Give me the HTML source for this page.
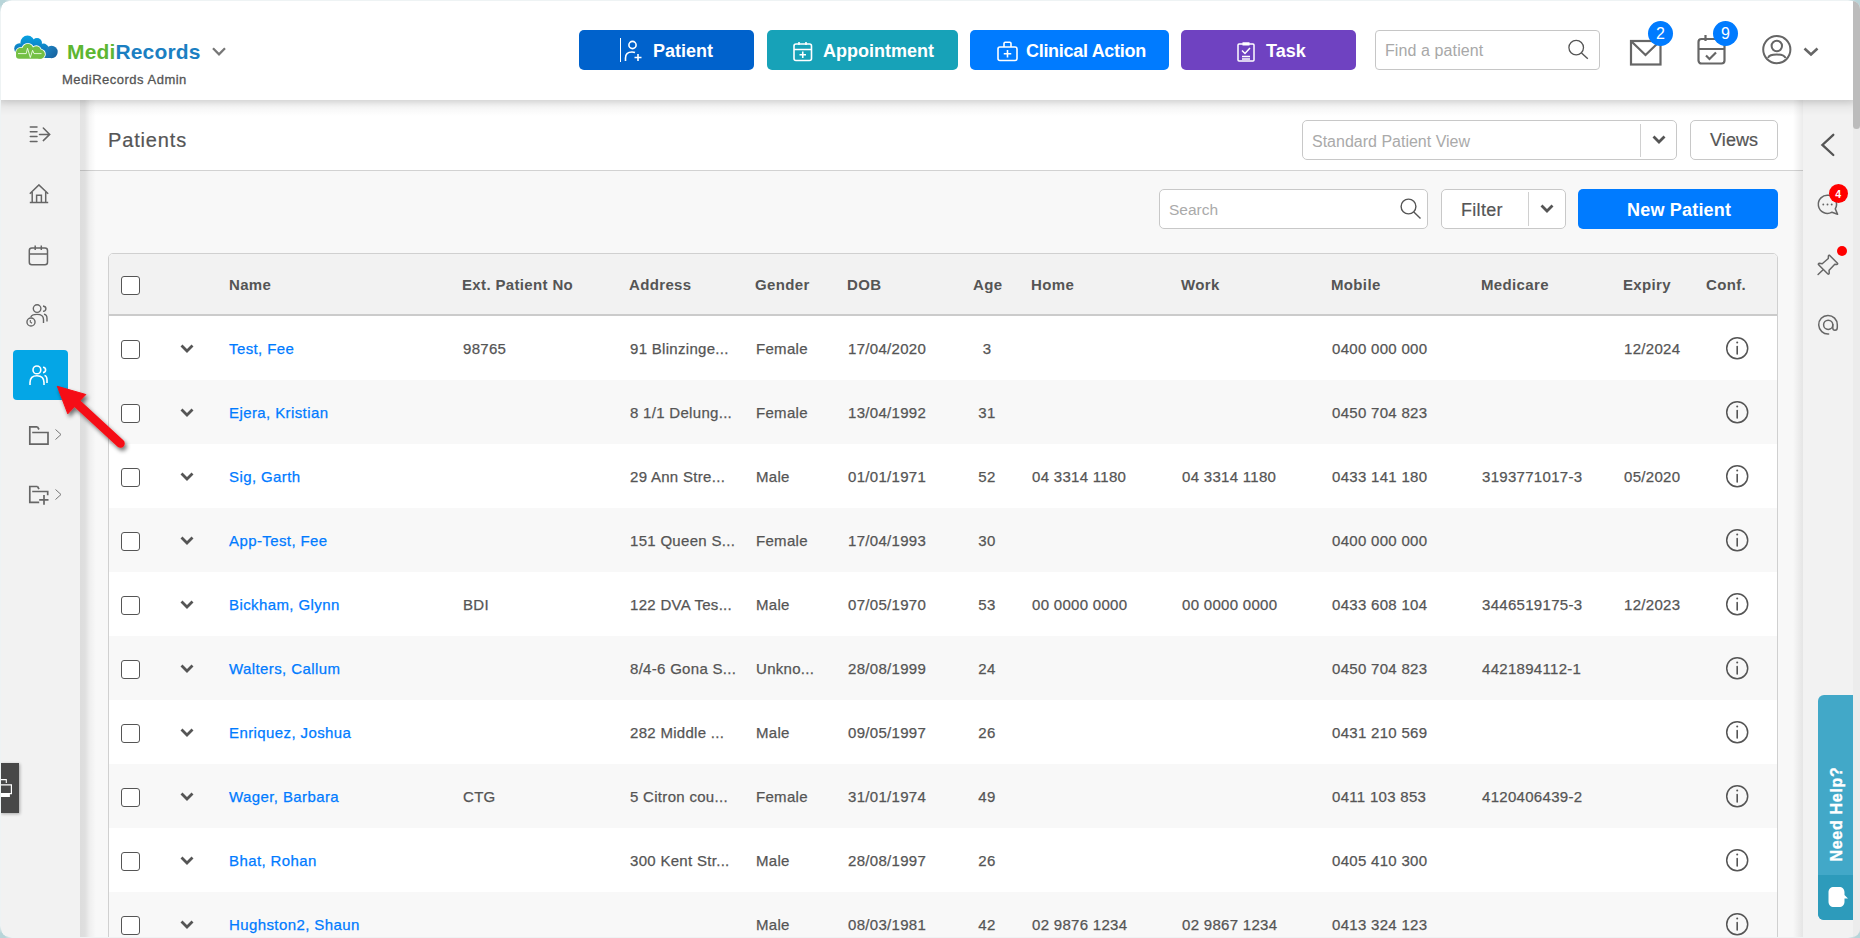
<!DOCTYPE html>
<html><head><meta charset="utf-8">
<style>
*{box-sizing:border-box;margin:0;padding:0}
html,body{width:1860px;height:938px;overflow:hidden;background:#eef3f4;font-family:"Liberation Sans",sans-serif;color:#555}
#win{position:absolute;left:0;top:0;width:1860px;height:938px;overflow:hidden;clip-path:inset(1px 0 1px 1px round 8px)}
.cor{position:absolute;width:12px;height:12px}
.c1{background:radial-gradient(circle at 0 0,#b8d5d9 5px,rgba(184,213,217,0) 12px)}.c2{background:radial-gradient(circle at 100% 0,#b8d5d9 5px,rgba(184,213,217,0) 12px)}.c3{background:radial-gradient(circle at 0 100%,#b8d5d9 5px,rgba(184,213,217,0) 12px)}.c4{background:radial-gradient(circle at 100% 100%,#b8d5d9 5px,rgba(184,213,217,0) 12px)}
.abs{position:absolute}
#hdr{position:absolute;left:1px;top:1px;width:1852px;height:99px;background:#fff;border-top-left-radius:8px;z-index:5;box-shadow:0 1px 8px rgba(0,0,0,.12)}
#lsb{position:absolute;left:1px;top:100px;width:79px;height:837px;background:#f2f2f2;border-bottom-left-radius:8px}
#main{position:absolute;left:80px;top:100px;width:1723px;height:838px;background:#f8f8f8;overflow:hidden}
#rsb{position:absolute;left:1803px;top:100px;width:50px;height:837px;background:#f2f2f2}
#sbar{position:absolute;left:1853px;top:0;width:7px;height:938px;background:#ececec;z-index:6}
#thumb{position:absolute;left:0;top:1px;width:7px;height:128px;background:#bcbcbc;border-radius:0 0 4px 4px}
.btn{position:absolute;top:30px;height:40px;border-radius:5px;color:#fff;font-weight:bold;font-size:18px;line-height:40px}
.btn span{position:absolute;top:1px}
.btn svg{position:absolute}
.txt{position:absolute;white-space:nowrap}
.row{position:absolute;left:0;width:1668px;height:64px;font-size:15px;line-height:64px;letter-spacing:.3px}
.row.alt{background:#f8f8f8}
.row span{position:absolute;top:.5px;white-space:nowrap;-webkit-text-stroke:.25px currentColor}
.row .nm{color:#007bff;left:121px;letter-spacing:.4px}
.cb{position:absolute;width:19px;height:19px;border:1.5px solid #555;border-radius:3px;background:#fff}
.hd span{position:absolute;white-space:nowrap;font-weight:bold;font-size:15px;letter-spacing:.35px;color:#555}
</style></head><body>
<div class="cor c1" style="left:0;top:0"></div><div class="cor c2" style="right:0;top:0"></div><div class="cor c3" style="left:0;bottom:0"></div><div class="cor c4" style="right:0;bottom:0"></div>
<div id="win">


<div id="hdr"></div>
<div class="abs" style="left:0;top:0;width:1860px;height:100px;z-index:7">
  <!-- logo -->
  <svg class="abs" style="left:0;top:0" width="70" height="70" viewBox="0 0 70 70">
    <defs>
      <linearGradient id="gb" x1="0" y1="35" x2="0" y2="57" gradientUnits="userSpaceOnUse"><stop offset="0" stop-color="#07a3e3"/><stop offset="1" stop-color="#1768ab"/></linearGradient>
      <linearGradient id="gd" x1="42" y1="45" x2="58" y2="58" gradientUnits="userSpaceOnUse"><stop offset="0" stop-color="#1f8fd0"/><stop offset="1" stop-color="#175d98"/></linearGradient>
    </defs>
    <g fill="url(#gd)"><circle cx="44.5" cy="48.5" r="4"/><circle cx="51.5" cy="52" r="6.2"/><rect x="42" y="50" width="10" height="8"/></g>
    <g fill="url(#gb)"><circle cx="19.5" cy="48.5" r="5.3"/><circle cx="27.5" cy="42.7" r="7.1"/><circle cx="37" cy="43" r="5"/><circle cx="43.5" cy="47" r="3.5"/><rect x="17" y="47" width="27" height="7"/></g>
    <g fill="#fff" stroke="#fff" stroke-width="1.8"><circle cx="21" cy="52.8" r="5"/><circle cx="27.8" cy="49.3" r="5.5"/><circle cx="36.3" cy="50.8" r="4.6"/><circle cx="40.3" cy="54.2" r="4.6"/><rect x="16" y="52" width="27" height="6.8" rx="3"/></g>
    <g fill="#74c044"><circle cx="21" cy="52.8" r="5"/><circle cx="27.8" cy="49.3" r="5.5"/><circle cx="36.3" cy="50.8" r="4.6"/><circle cx="40.3" cy="54.2" r="4.6"/><rect x="16" y="52" width="27" height="6.8" rx="3"/></g>
    <path d="M18 53.6 L26.2 53.6 L27.5 48.2 L30.3 57.5 L32.6 50.3 L34 53.6 L41.5 53.6" fill="none" stroke="#f4fff0" stroke-width=".9" stroke-linejoin="round" opacity=".95"/>
  </svg>
  <div class="txt" style="left:67px;top:39px;font-size:21px;font-weight:bold;letter-spacing:.15px;line-height:25px"><span style="color:#5db632">Medi</span><span style="color:#1b7fc2">Records</span></div>
  <svg class="abs" style="left:211px;top:46px" width="16" height="10" viewBox="0 0 16 10"><path d="M2 2.3 L8 8.3 L14 2.3" fill="none" stroke="#777" stroke-width="2.3"/></svg>
  <div class="txt" style="left:62px;top:72px;font-size:13px;letter-spacing:.5px;color:#555;line-height:16px;-webkit-text-stroke:.3px #555">MediRecords Admin</div>

  <!-- buttons -->
  <div class="btn" style="left:579px;width:175px;background:#0062cc">
    <div class="abs" style="left:41px;top:8px;width:1px;height:24px;background:#fff"></div>
    <svg style="left:45px;top:10px" width="20" height="22" viewBox="0 0 20 22"><circle cx="8.5" cy="5" r="3.6" fill="none" stroke="#fff" stroke-width="1.6"/><path d="M1.5 21 L1.5 18 C1.5 14 4 12 8 12 C9 12 10 12.2 11 12.6" fill="none" stroke="#fff" stroke-width="1.6"/><path d="M14 14 L14 21 M10.5 17.5 L17.5 17.5" stroke="#fff" stroke-width="1.6"/></svg>
    <span style="left:74px">Patient</span>
  </div>
  <div class="btn" style="left:767px;width:191px;background:#17a2b8">
    <svg style="left:26px;top:11px" width="20" height="21" viewBox="0 0 20 21"><rect x="1" y="3" width="17.5" height="16.5" rx="2" fill="none" stroke="#fff" stroke-width="1.6"/><path d="M1 8.5 H18.5 M6 1 V4 M13 1 V4 M9.75 10.5 V17 M6.5 13.75 H13" stroke="#fff" stroke-width="1.6"/></svg>
    <span style="left:56px">Appointment</span>
  </div>
  <div class="btn" style="left:970px;width:199px;background:#007bff">
    <svg style="left:27px;top:11px" width="21" height="21" viewBox="0 0 21 21"><rect x="1" y="6" width="19" height="13.5" rx="2" fill="none" stroke="#fff" stroke-width="1.6"/><path d="M7 6 V2.5 C7 1.8 7.5 1.3 8.2 1.3 H12.8 C13.5 1.3 14 1.8 14 2.5 V6" fill="none" stroke="#fff" stroke-width="1.6"/><path d="M10.5 9 V16.5 M6.75 12.75 H14.25" stroke="#fff" stroke-width="1.6"/></svg>
    <span style="left:56px;letter-spacing:-.3px">Clinical Action</span>
  </div>
  <div class="btn" style="left:1181px;width:175px;background:#6f42c1">
    <svg style="left:56px;top:11px" width="18" height="21" viewBox="0 0 18 21"><rect x="1" y="3" width="16" height="17" rx="1" fill="none" stroke="#fff" stroke-width="1.5"/><path d="M5.5 1.2 H12.5 V4.5 H5.5 Z" fill="#fff"/><path d="M5 9.5 L8 12.5 L13 7" fill="none" stroke="#fff" stroke-width="1.5"/><path d="M5 15.5 H13 M5 18 H13" stroke="#fff" stroke-width="1.5"/></svg>
    <span style="left:85px">Task</span>
  </div>

  <!-- find patient -->
  <div class="abs" style="left:1375px;top:30px;width:225px;height:40px;border:1px solid #c6c6c6;border-radius:4px;background:#fff"></div>
  <div class="txt" style="left:1385px;top:41px;font-size:16px;line-height:19px;color:#a8a8a8;letter-spacing:.1px">Find a patient</div>
  <svg class="abs" style="left:1566px;top:38px" width="24" height="24" viewBox="0 0 24 24"><circle cx="10.2" cy="9.6" r="7.3" fill="none" stroke="#555" stroke-width="1.3"/><path d="M15.5 15 L21.8 20.7" stroke="#555" stroke-width="1.4"/></svg>

  <!-- mail -->
  <svg class="abs" style="left:1628px;top:38px" width="36" height="30" viewBox="0 0 36 30"><rect x="3" y="3" width="29.5" height="23.5" fill="none" stroke="#666" stroke-width="2.2"/><path d="M3.5 3.5 L17.5 17 L31.5 3.5" fill="none" stroke="#666" stroke-width="2.2"/></svg>
  <div class="abs" style="left:1648px;top:21px;width:25px;height:25px;border-radius:50%;background:#007bff;color:#fff;font-size:16px;line-height:25px;text-align:center">2</div>
  <!-- calendar -->
  <svg class="abs" style="left:1695px;top:33px" width="34" height="34" viewBox="0 0 34 34"><rect x="3.5" y="6" width="26" height="24.5" rx="3" fill="none" stroke="#666" stroke-width="2.2"/><path d="M3.5 16 H29.5 M10.5 2 V8 M22 2 V8 M11 22.5 L14.5 26 L21 19.5" fill="none" stroke="#666" stroke-width="2.2"/></svg>
  <div class="abs" style="left:1713px;top:21px;width:25px;height:25px;border-radius:50%;background:#007bff;color:#fff;font-size:16px;line-height:25px;text-align:center">9</div>
  <!-- user -->
  <svg class="abs" style="left:1760px;top:33px" width="34" height="34" viewBox="0 0 34 34"><circle cx="16.8" cy="16.6" r="13.6" fill="none" stroke="#666" stroke-width="2"/><circle cx="16.8" cy="13" r="5.2" fill="none" stroke="#666" stroke-width="2"/><path d="M8 25 C9 22 11.5 21.5 16.8 21.5 C22 21.5 24.5 22 25.5 25" fill="none" stroke="#666" stroke-width="2"/></svg>
  <svg class="abs" style="left:1802px;top:46px" width="18" height="12" viewBox="0 0 18 12"><path d="M2.5 2.5 L9 8.5 L15.5 2.5" fill="none" stroke="#666" stroke-width="2.6"/></svg>
</div>

<div id="lsb"></div>
<div class="abs" style="left:0;top:0;width:80px;height:938px;z-index:3">
  <!-- expand -->
  <svg class="abs" style="left:28px;top:124px" width="24" height="20" viewBox="0 0 24 20"><path d="M2.3 3 H9 M2.3 7.8 H9 M2.3 12.6 H9 M2.3 17.5 H9 M11.5 10.4 H21.5 M15.3 4 L21.7 10.4 L15.3 16.6" fill="none" stroke="#666" stroke-width="1.5" stroke-linecap="round"/></svg>
  <!-- home -->
  <svg class="abs" style="left:27px;top:184px" width="24" height="22" viewBox="0 0 24 22"><path d="M2.8 9.7 L11.9 0.9 L21.2 9.7 M5.2 8 V18.5 M18.7 8 V18.5 M2.8 18.5 H21.2 M9.6 18.5 V11.2 H14.4 V18.5" fill="none" stroke="#666" stroke-width="1.5"/></svg>
  <!-- calendar -->
  <svg class="abs" style="left:27px;top:244px" width="24" height="22" viewBox="0 0 24 22"><rect x="2.3" y="4.1" width="18.2" height="16.7" rx="2.5" fill="none" stroke="#666" stroke-width="1.5"/><path d="M2.3 10 H20.5 M8.2 1.6 V6 M14.3 1.6 V6" fill="none" stroke="#666" stroke-width="1.5"/></svg>
  <!-- patients w/ clock -->
  <svg class="abs" style="left:20px;top:295px" width="40" height="40" viewBox="0 0 40 40"><circle cx="17.1" cy="13.6" r="3.8" fill="none" stroke="#666" stroke-width="1.4"/><path d="M23 11 C25 11.3 25.9 12.5 25.9 13.7 C25.9 15 25 16.2 23 16.4 M10.8 22.2 C11.5 20.2 14 19.4 17 19.4 C21 19.4 23.5 21 23.5 24.5 V27.9 M24 19.3 C26 19.6 27 21 27 23.5 V26.6" fill="none" stroke="#666" stroke-width="1.4"/><circle cx="11" cy="27" r="4.05" fill="#f2f2f2" stroke="#666" stroke-width="1.4"/><path d="M10.3 25 V27 L12 28.3" fill="none" stroke="#666" stroke-width="1.1"/></svg>
  <!-- active patients -->
  <div class="abs" style="left:13px;top:350px;width:55px;height:50px;border-radius:4px;background:#04a6e6"></div>
  <svg class="abs" style="left:27px;top:364px" width="24" height="24" viewBox="0 0 24 24"><circle cx="9.9" cy="5.9" r="3.9" fill="none" stroke="#fff" stroke-width="1.6"/><path d="M16 3.3 C17.8 3.5 18.6 4.7 18.6 6 C18.6 7.3 17.8 8.4 16 8.6 M3 21 V18.5 C3 14 5.5 11.7 10 11.7 C14.5 11.7 17 14 17 18.5 V21 M17.5 11.5 C19 11.8 20 13.5 20 16 V19" fill="none" stroke="#fff" stroke-width="1.6"/></svg>
  <!-- folder -->
  <svg class="abs" style="left:27px;top:424px" width="40" height="24" viewBox="0 0 40 24"><path d="M10.5 2.8 L12 5.5 M2.8 2.8 H10.5 M2.8 2 V20.2 H21 V8.5 H5.2" fill="none" stroke="#666" stroke-width="1.7"/><path d="M28.5 5.5 L34 10.5 L28.5 15.5" fill="none" stroke="#777" stroke-width="1"/></svg>
  <!-- folder plus -->
  <svg class="abs" style="left:27px;top:484px" width="40" height="26" viewBox="0 0 40 26"><path d="M10.5 2.5 L12 5.2 M2.8 2.5 H10.5 M2.8 1.8 V18.4 H12.2 M5.2 7.5 H20.7 V11.2" fill="none" stroke="#666" stroke-width="1.7"/><path d="M17 11 V20.8 M12.2 15.8 H21.5" fill="none" stroke="#666" stroke-width="1.7"/><path d="M28.5 5.5 L34 10.5 L28.5 15.5" fill="none" stroke="#777" stroke-width="1"/></svg>
  <!-- dark tab -->
  <div class="abs" style="left:0;top:763px;width:19px;height:50px;background:#484848;box-shadow:1px 1px 3px rgba(0,0,0,.3)"></div>
  <svg class="abs" style="left:0;top:776px" width="16" height="24" viewBox="0 0 16 24"><path d="M-1 3.6 H6.3 V7" fill="none" stroke="#fff" stroke-width="1.1"/><path d="M-1 8.8 H11.4 V17.6 H-1" fill="none" stroke="#fff" stroke-width="1.2"/><rect x="-1" y="17.8" width="10.9" height="3.2" fill="#fff"/></svg>
</div>
<!-- sidebar shadow -->
<div class="abs" style="left:80px;top:100px;width:16px;height:838px;background:linear-gradient(to right,rgba(0,0,0,.11),rgba(0,0,0,.10) 30%,rgba(0,0,0,.04) 60%,rgba(0,0,0,0));z-index:2"></div>
<div id="main"></div>
<div class="abs" style="left:80px;top:100px;width:1723px;height:71px;background:#fff;border-bottom:1px solid #d2d2d2;z-index:1"></div>
<!-- header shadow over main -->
<div class="abs" style="left:0;top:100px;width:1853px;height:16px;background:linear-gradient(to bottom,rgba(0,0,0,.09),rgba(0,0,0,.04) 40%,rgba(0,0,0,0));z-index:4"></div>
<!-- right sidebar shadow -->
<div class="abs" style="left:1793px;top:100px;width:10px;height:838px;background:linear-gradient(to left,rgba(0,0,0,.08),rgba(0,0,0,0));z-index:2"></div>
<div class="abs" style="left:0;top:0;width:1860px;height:938px;z-index:1">
  <div class="txt" style="left:108px;top:128px;font-size:20px;line-height:24px;letter-spacing:.85px;color:#555;-webkit-text-stroke:.2px #555">Patients</div>
  <!-- view dropdown -->
  <div class="abs" style="left:1302px;top:120px;width:375px;height:40px;border:1px solid #c8c8c8;border-radius:5px;background:#fff"></div>
  <div class="abs" style="left:1640px;top:124px;width:1px;height:33px;background:#d0d0d0"></div>
  <div class="txt" style="left:1312px;top:132px;font-size:16px;line-height:19px;color:#aaa">Standard Patient View</div>
  <svg class="abs" style="left:1651px;top:134px" width="16" height="12" viewBox="0 0 16 12"><path d="M2.5 2.5 L8 8 L13.5 2.5" fill="none" stroke="#555" stroke-width="2.8"/></svg>
  <div class="abs" style="left:1690px;top:120px;width:88px;height:40px;border:1px solid #c8c8c8;border-radius:5px;background:#fff"></div>
  <div class="txt" style="left:1710px;top:130px;font-size:18px;line-height:21px;color:#555;letter-spacing:.1px;-webkit-text-stroke:.2px #555">Views</div>

  <!-- toolbar -->
  <div class="abs" style="left:1159px;top:189px;width:269px;height:40px;border:1px solid #c8c8c8;border-radius:5px;background:#fff"></div>
  <div class="txt" style="left:1169px;top:200px;font-size:15.5px;line-height:19px;color:#aaa">Search</div>
  <svg class="abs" style="left:1398px;top:196px" width="26" height="26" viewBox="0 0 26 26"><circle cx="10.5" cy="10.5" r="7.4" fill="none" stroke="#555" stroke-width="1.4"/><path d="M15.8 16 L22.5 22.5" stroke="#555" stroke-width="1.4"/></svg>
  <div class="abs" style="left:1441px;top:189px;width:125px;height:40px;border:1px solid #c8c8c8;border-radius:5px;background:#fff"></div>
  <div class="abs" style="left:1528px;top:192px;width:1px;height:34px;background:#d0d0d0"></div>
  <div class="txt" style="left:1461px;top:200px;font-size:18px;line-height:21px;color:#555;letter-spacing:.3px;-webkit-text-stroke:.2px #555">Filter</div>
  <svg class="abs" style="left:1539px;top:203px" width="16" height="12" viewBox="0 0 16 12"><path d="M2.5 2.5 L8 8 L13.5 2.5" fill="none" stroke="#555" stroke-width="2.8"/></svg>
  <div class="abs" style="left:1578px;top:189px;width:200px;height:40px;border-radius:5px;background:#007bff"></div>
  <div class="txt" style="left:1627px;top:200px;font-size:18px;line-height:21px;color:#fff;font-weight:bold;letter-spacing:.2px">New Patient</div>

  <!-- table -->
  <div class="abs" style="left:108px;top:253px;width:1670px;height:700px;border:1px solid #d0d0d0;border-radius:5px 5px 0 0;background:#fff;overflow:hidden">
    <div class="abs hd" style="left:0;top:0;width:1668px;height:62px;background:#f2f2f2;border-bottom:2px solid #cbcbcb">
      <div class="cb" style="left:12px;top:22px"></div>
      <span style="left:120px;top:22px">Name</span>
      <span style="left:353px;top:22px">Ext. Patient No</span>
      <span style="left:520px;top:22px">Address</span>
      <span style="left:646px;top:22px">Gender</span>
      <span style="left:738px;top:22px">DOB</span>
      <span style="left:864px;top:22px">Age</span>
      <span style="left:922px;top:22px">Home</span>
      <span style="left:1072px;top:22px">Work</span>
      <span style="left:1222px;top:22px">Mobile</span>
      <span style="left:1372px;top:22px">Medicare</span>
      <span style="left:1514px;top:22px">Expiry</span>
      <span style="left:1597px;top:22px">Conf.</span>
    </div>
    <div class="row" style="top:62px"><div class="cb" style="left:12px;top:24px"></div><svg class="abs" style="left:70px;top:27px" width="16" height="12" viewBox="0 0 16 12"><path d="M2.5 2.5 L8 8 L13.5 2.5" fill="none" stroke="#555" stroke-width="2.8"/></svg><span class="nm" style="left:120px">Test, Fee</span><span style="left:354px">98765</span><span style="left:521px">91 Blinzinge...</span><span style="left:647px">Female</span><span style="left:739px">17/04/2020</span><span style="left:849px;width:58px;text-align:center">3</span><span style="left:1223px">0400 000 000</span><span style="left:1515px">12/2024</span><svg class="abs" style="left:1616px;top:20px" width="25" height="25" viewBox="0 0 25 25"><circle cx="12.2" cy="12.2" r="10.5" fill="none" stroke="#555" stroke-width="1.5"/><circle cx="12.2" cy="6.6" r="1" fill="#555"/><path d="M12.2 10.5 V18" stroke="#555" stroke-width="1.6" stroke-linecap="round"/></svg></div>
    <div class="row alt" style="top:126px"><div class="cb" style="left:12px;top:24px"></div><svg class="abs" style="left:70px;top:27px" width="16" height="12" viewBox="0 0 16 12"><path d="M2.5 2.5 L8 8 L13.5 2.5" fill="none" stroke="#555" stroke-width="2.8"/></svg><span class="nm" style="left:120px">Ejera, Kristian</span><span style="left:521px">8 1/1 Delung...</span><span style="left:647px">Female</span><span style="left:739px">13/04/1992</span><span style="left:849px;width:58px;text-align:center">31</span><span style="left:1223px">0450 704 823</span><svg class="abs" style="left:1616px;top:20px" width="25" height="25" viewBox="0 0 25 25"><circle cx="12.2" cy="12.2" r="10.5" fill="none" stroke="#555" stroke-width="1.5"/><circle cx="12.2" cy="6.6" r="1" fill="#555"/><path d="M12.2 10.5 V18" stroke="#555" stroke-width="1.6" stroke-linecap="round"/></svg></div>
    <div class="row" style="top:190px"><div class="cb" style="left:12px;top:24px"></div><svg class="abs" style="left:70px;top:27px" width="16" height="12" viewBox="0 0 16 12"><path d="M2.5 2.5 L8 8 L13.5 2.5" fill="none" stroke="#555" stroke-width="2.8"/></svg><span class="nm" style="left:120px">Sig, Garth</span><span style="left:521px">29 Ann Stre...</span><span style="left:647px">Male</span><span style="left:739px">01/01/1971</span><span style="left:849px;width:58px;text-align:center">52</span><span style="left:923px">04 3314 1180</span><span style="left:1073px">04 3314 1180</span><span style="left:1223px">0433 141 180</span><span style="left:1373px">3193771017-3</span><span style="left:1515px">05/2020</span><svg class="abs" style="left:1616px;top:20px" width="25" height="25" viewBox="0 0 25 25"><circle cx="12.2" cy="12.2" r="10.5" fill="none" stroke="#555" stroke-width="1.5"/><circle cx="12.2" cy="6.6" r="1" fill="#555"/><path d="M12.2 10.5 V18" stroke="#555" stroke-width="1.6" stroke-linecap="round"/></svg></div>
    <div class="row alt" style="top:254px"><div class="cb" style="left:12px;top:24px"></div><svg class="abs" style="left:70px;top:27px" width="16" height="12" viewBox="0 0 16 12"><path d="M2.5 2.5 L8 8 L13.5 2.5" fill="none" stroke="#555" stroke-width="2.8"/></svg><span class="nm" style="left:120px">App-Test, Fee</span><span style="left:521px">151 Queen S...</span><span style="left:647px">Female</span><span style="left:739px">17/04/1993</span><span style="left:849px;width:58px;text-align:center">30</span><span style="left:1223px">0400 000 000</span><svg class="abs" style="left:1616px;top:20px" width="25" height="25" viewBox="0 0 25 25"><circle cx="12.2" cy="12.2" r="10.5" fill="none" stroke="#555" stroke-width="1.5"/><circle cx="12.2" cy="6.6" r="1" fill="#555"/><path d="M12.2 10.5 V18" stroke="#555" stroke-width="1.6" stroke-linecap="round"/></svg></div>
    <div class="row" style="top:318px"><div class="cb" style="left:12px;top:24px"></div><svg class="abs" style="left:70px;top:27px" width="16" height="12" viewBox="0 0 16 12"><path d="M2.5 2.5 L8 8 L13.5 2.5" fill="none" stroke="#555" stroke-width="2.8"/></svg><span class="nm" style="left:120px">Bickham, Glynn</span><span style="left:354px">BDI</span><span style="left:521px">122 DVA Tes...</span><span style="left:647px">Male</span><span style="left:739px">07/05/1970</span><span style="left:849px;width:58px;text-align:center">53</span><span style="left:923px">00 0000 0000</span><span style="left:1073px">00 0000 0000</span><span style="left:1223px">0433 608 104</span><span style="left:1373px">3446519175-3</span><span style="left:1515px">12/2023</span><svg class="abs" style="left:1616px;top:20px" width="25" height="25" viewBox="0 0 25 25"><circle cx="12.2" cy="12.2" r="10.5" fill="none" stroke="#555" stroke-width="1.5"/><circle cx="12.2" cy="6.6" r="1" fill="#555"/><path d="M12.2 10.5 V18" stroke="#555" stroke-width="1.6" stroke-linecap="round"/></svg></div>
    <div class="row alt" style="top:382px"><div class="cb" style="left:12px;top:24px"></div><svg class="abs" style="left:70px;top:27px" width="16" height="12" viewBox="0 0 16 12"><path d="M2.5 2.5 L8 8 L13.5 2.5" fill="none" stroke="#555" stroke-width="2.8"/></svg><span class="nm" style="left:120px">Walters, Callum</span><span style="left:521px">8/4-6 Gona S...</span><span style="left:647px">Unkno...</span><span style="left:739px">28/08/1999</span><span style="left:849px;width:58px;text-align:center">24</span><span style="left:1223px">0450 704 823</span><span style="left:1373px">4421894112-1</span><svg class="abs" style="left:1616px;top:20px" width="25" height="25" viewBox="0 0 25 25"><circle cx="12.2" cy="12.2" r="10.5" fill="none" stroke="#555" stroke-width="1.5"/><circle cx="12.2" cy="6.6" r="1" fill="#555"/><path d="M12.2 10.5 V18" stroke="#555" stroke-width="1.6" stroke-linecap="round"/></svg></div>
    <div class="row" style="top:446px"><div class="cb" style="left:12px;top:24px"></div><svg class="abs" style="left:70px;top:27px" width="16" height="12" viewBox="0 0 16 12"><path d="M2.5 2.5 L8 8 L13.5 2.5" fill="none" stroke="#555" stroke-width="2.8"/></svg><span class="nm" style="left:120px">Enriquez, Joshua</span><span style="left:521px">282 Middle ...</span><span style="left:647px">Male</span><span style="left:739px">09/05/1997</span><span style="left:849px;width:58px;text-align:center">26</span><span style="left:1223px">0431 210 569</span><svg class="abs" style="left:1616px;top:20px" width="25" height="25" viewBox="0 0 25 25"><circle cx="12.2" cy="12.2" r="10.5" fill="none" stroke="#555" stroke-width="1.5"/><circle cx="12.2" cy="6.6" r="1" fill="#555"/><path d="M12.2 10.5 V18" stroke="#555" stroke-width="1.6" stroke-linecap="round"/></svg></div>
    <div class="row alt" style="top:510px"><div class="cb" style="left:12px;top:24px"></div><svg class="abs" style="left:70px;top:27px" width="16" height="12" viewBox="0 0 16 12"><path d="M2.5 2.5 L8 8 L13.5 2.5" fill="none" stroke="#555" stroke-width="2.8"/></svg><span class="nm" style="left:120px">Wager, Barbara</span><span style="left:354px">CTG</span><span style="left:521px">5 Citron cou...</span><span style="left:647px">Female</span><span style="left:739px">31/01/1974</span><span style="left:849px;width:58px;text-align:center">49</span><span style="left:1223px">0411 103 853</span><span style="left:1373px">4120406439-2</span><svg class="abs" style="left:1616px;top:20px" width="25" height="25" viewBox="0 0 25 25"><circle cx="12.2" cy="12.2" r="10.5" fill="none" stroke="#555" stroke-width="1.5"/><circle cx="12.2" cy="6.6" r="1" fill="#555"/><path d="M12.2 10.5 V18" stroke="#555" stroke-width="1.6" stroke-linecap="round"/></svg></div>
    <div class="row" style="top:574px"><div class="cb" style="left:12px;top:24px"></div><svg class="abs" style="left:70px;top:27px" width="16" height="12" viewBox="0 0 16 12"><path d="M2.5 2.5 L8 8 L13.5 2.5" fill="none" stroke="#555" stroke-width="2.8"/></svg><span class="nm" style="left:120px">Bhat, Rohan</span><span style="left:521px">300 Kent Str...</span><span style="left:647px">Male</span><span style="left:739px">28/08/1997</span><span style="left:849px;width:58px;text-align:center">26</span><span style="left:1223px">0405 410 300</span><svg class="abs" style="left:1616px;top:20px" width="25" height="25" viewBox="0 0 25 25"><circle cx="12.2" cy="12.2" r="10.5" fill="none" stroke="#555" stroke-width="1.5"/><circle cx="12.2" cy="6.6" r="1" fill="#555"/><path d="M12.2 10.5 V18" stroke="#555" stroke-width="1.6" stroke-linecap="round"/></svg></div>
    <div class="row alt" style="top:638px"><div class="cb" style="left:12px;top:24px"></div><svg class="abs" style="left:70px;top:27px" width="16" height="12" viewBox="0 0 16 12"><path d="M2.5 2.5 L8 8 L13.5 2.5" fill="none" stroke="#555" stroke-width="2.8"/></svg><span class="nm" style="left:120px">Hughston2, Shaun</span><span style="left:647px">Male</span><span style="left:739px">08/03/1981</span><span style="left:849px;width:58px;text-align:center">42</span><span style="left:923px">02 9876 1234</span><span style="left:1073px">02 9867 1234</span><span style="left:1223px">0413 324 123</span><svg class="abs" style="left:1616px;top:20px" width="25" height="25" viewBox="0 0 25 25"><circle cx="12.2" cy="12.2" r="10.5" fill="none" stroke="#555" stroke-width="1.5"/><circle cx="12.2" cy="6.6" r="1" fill="#555"/><path d="M12.2 10.5 V18" stroke="#555" stroke-width="1.6" stroke-linecap="round"/></svg></div>
  </div>
</div>
<div id="rsb"></div>
<div class="abs" style="left:0;top:0;width:1860px;height:938px;z-index:3;pointer-events:none">
  <!-- chevron left -->
  <svg class="abs" style="left:1818px;top:130px" width="20" height="30" viewBox="0 0 20 30"><path d="M15.3 4.8 L4.4 14.9 L15.3 25" fill="none" stroke="#555" stroke-width="2.3" stroke-linecap="round"/></svg>
  <!-- chat -->
  <svg class="abs" style="left:1815px;top:193px" width="26" height="25" viewBox="0 0 26 25"><path d="M20.28 15.85 L22.6 21.3 L16.95 19.18 A9.1 9.1 0 1 1 20.28 15.85 Z" fill="none" stroke="#666" stroke-width="1.5" stroke-linejoin="round"/><circle cx="8.3" cy="11.5" r=".95" fill="#666"/><circle cx="12.5" cy="11.5" r=".95" fill="#666"/><circle cx="16.7" cy="11.5" r=".95" fill="#666"/></svg>
  <div class="abs" style="left:1828.6px;top:183.8px;width:19px;height:19px;border-radius:50%;background:#ff0000;color:#fff;font-size:10.5px;font-weight:bold;line-height:21px;text-align:center">4</div>
  <!-- pin -->
  <svg class="abs" style="left:1815px;top:252px" width="26" height="26" viewBox="0 0 26 26"><path d="M14.5 3.2 L22.5 11.2 C23 11.8 22.5 12.5 21.5 12.4 L19.8 12.3 L14.1 18.3 L14.2 20.5 C14.3 22 13.6 22.6 12.9 22 L3.6 12.8 C3 12.2 3.4 11.3 4.5 11.3 L7.2 11.8 L13.3 6.5 L13.4 4.2 C13.5 3.3 14 3 14.5 3.2 Z" fill="none" stroke="#666" stroke-width="1.5" stroke-linejoin="round"/><path d="M8.1 17.8 L3.1 22.5" stroke="#666" stroke-width="1.5" stroke-linecap="round"/></svg>
  <div class="abs" style="left:1837px;top:246px;width:10px;height:10px;border-radius:50%;background:#ff0000"></div>
  <!-- at -->
  <svg class="abs" style="left:1815px;top:312px" width="26" height="26" viewBox="0 0 26 26"><circle cx="13.2" cy="12.8" r="4.6" fill="none" stroke="#666" stroke-width="1.5"/><path d="M17.8 12.5 V16 C17.8 17.5 18.8 18.3 20 18.3 C21.3 18.3 22.3 17.2 22.3 15.5 V12.8 A9.3 9.3 0 1 0 13.6 22" fill="none" stroke="#666" stroke-width="1.5" stroke-linecap="round"/></svg>
  <!-- need help -->
  <div class="abs" style="left:1818px;top:695px;width:35px;height:225px;background:#42a8c8;border-radius:6px 0 0 6px;overflow:hidden">
    <div class="abs" style="left:0;top:180px;width:35px;height:45px;background:#2d9bbb"></div>
  </div>
  <div class="txt" style="left:1789px;top:804px;width:96px;height:20px;line-height:20px;font-size:16px;font-weight:bold;color:#fff;letter-spacing:.7px;transform:rotate(-90deg);text-align:center;-webkit-text-stroke:.35px #fff">Need Help?</div>
  <svg class="abs" style="left:1826px;top:885px" width="24" height="25" viewBox="0 0 24 25"><path d="M8 2 H13 C16.5 2 18.5 4 18.5 7.5 V10 L22 13.5 H18.5 V16.5 C18.5 20 16.5 22 13 22 H8 C4.5 22 2.5 20 2.5 16.5 V7.5 C2.5 4 4.5 2 8 2 Z" fill="#fff"/></svg>
</div>
<!-- red arrow annotation -->
<svg class="abs" style="left:0;top:0;z-index:8" width="200" height="500" viewBox="0 0 200 500">
  <defs><filter id="ds" x="-30%" y="-30%" width="160%" height="160%"><feGaussianBlur in="SourceAlpha" stdDeviation="2"/><feOffset dx="1.5" dy="2.5"/><feComponentTransfer><feFuncA type="linear" slope=".55"/></feComponentTransfer><feMerge><feMergeNode/><feMergeNode in="SourceGraphic"/></feMerge></filter></defs>
  <g filter="url(#ds)">
    <path d="M120.5 443.5 L76 402.5" stroke="#f50f14" stroke-width="8.5" stroke-linecap="round"/>
    <path d="M57.3 386.3 L85.8 394.5 L67.8 413.8 Z" fill="#f50f14" stroke="#f50f14" stroke-width="1" stroke-linejoin="round"/>
  </g>
</svg>
<div id="sbar"><div id="thumb"></div></div>

</div>
</body></html>
